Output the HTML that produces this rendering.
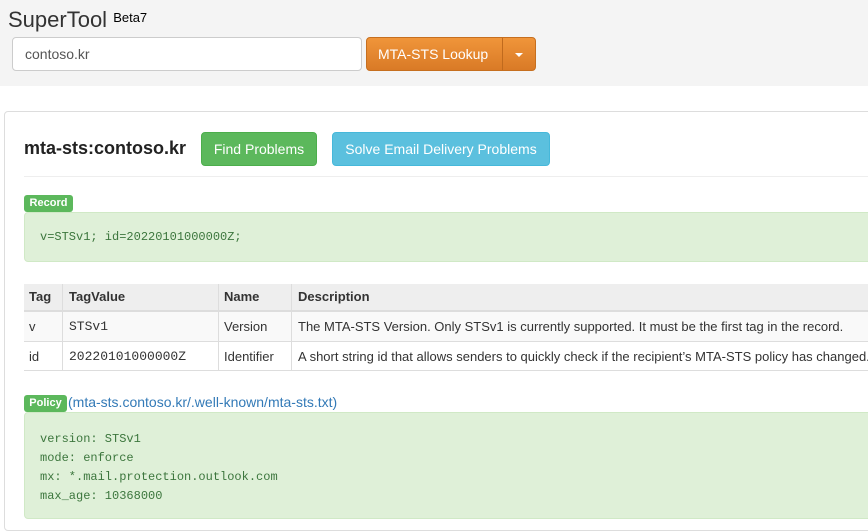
<!DOCTYPE html>
<html><head><meta charset="utf-8"><style>
*{box-sizing:border-box;margin:0;padding:0}
body{width:868px;height:522px;overflow:hidden;background:#fff;font-family:"Liberation Sans",Arial,sans-serif;color:#333;position:relative}
.a{position:absolute;white-space:nowrap}
.mono{font-family:"Liberation Mono",monospace}
</style></head><body>
<div class="a" style="left:0;top:0;width:868px;height:86px;background:#f4f4f4"></div>
<div class="a" style="left:8px;top:7px;font-size:22px;color:#333">SuperTool <span style="font-size:13px;color:#000;position:relative;top:-5px">Beta7</span></div>
<div class="a" style="left:12px;top:37px;width:350px;height:34px;background:#fff;border:1px solid #ccc;border-radius:4px;font-size:14px;color:#555;padding:8px 12px">contoso.kr</div>
<div class="a" style="left:366px;top:37px;width:170px;height:34px;border-radius:4px;background:linear-gradient(#f0953a,#d97a26);border:1px solid #c66f1f"></div>
<div class="a" style="left:378px;top:46px;font-size:14px;color:#fff">MTA-STS Lookup</div>
<div class="a" style="left:502px;top:38px;width:1px;height:32px;background:#c06a1d"></div>
<div class="a" style="left:515px;top:53px;width:0;height:0;border-left:4px solid transparent;border-right:4px solid transparent;border-top:4px solid #fff"></div>

<div class="a" style="left:4px;top:111px;width:880px;height:420px;border:1px solid #ddd;border-radius:4px"></div>
<div class="a" style="left:24px;top:138px;font-size:18px;font-weight:bold;color:#222">mta-sts:contoso.kr</div>
<div class="a" style="left:201px;top:132px;width:116px;height:34px;background:#5cb85c;border:1px solid #4cae4c;border-radius:4px;color:#fff;font-size:14px;text-align:center;line-height:32px">Find Problems</div>
<div class="a" style="left:332px;top:132px;width:218px;height:34px;background:#5bc0de;border:1px solid #46b8da;border-radius:4px;color:#fff;font-size:14px;text-align:center;line-height:32px">Solve Email Delivery Problems</div>
<div class="a" style="left:24px;top:176px;width:850px;height:1px;background:#eee"></div>

<div class="a" style="left:24px;top:195px;width:49px;height:17px;background:#5cb85c;border-radius:3px;color:#fff;font-size:11px;font-weight:bold;text-align:center;line-height:17px">Record</div>
<div class="a" style="left:24px;top:212px;width:860px;height:50px;background:#dff0d8;border:1px solid #d0e9c6;border-radius:4px"></div>
<div class="a mono" style="left:40px;top:230px;font-size:12px;color:#3c763d">v=STSv1; id=20220101000000Z;</div>

<div class="a" style="left:24px;top:284px;width:860px;height:28px;background:#eee;border-bottom:2px solid #ddd"></div>
<div class="a" style="left:24px;top:312px;width:860px;height:30px;background:#f9f9f9;border-bottom:1px solid #ddd"></div>
<div class="a" style="left:24px;top:342px;width:860px;height:29px;border-bottom:1px solid #ddd"></div>
<div class="a" style="left:62px;top:284px;width:1px;height:87px;background:#ddd"></div>
<div class="a" style="left:218px;top:284px;width:1px;height:87px;background:#ddd"></div>
<div class="a" style="left:291px;top:284px;width:1px;height:87px;background:#ddd"></div>
<div class="a" style="left:29px;top:289px;font-size:13px;font-weight:bold">Tag</div>
<div class="a" style="left:69px;top:289px;font-size:13px;font-weight:bold">TagValue</div>
<div class="a" style="left:224px;top:289px;font-size:13px;font-weight:bold">Name</div>
<div class="a" style="left:298px;top:289px;font-size:13px;font-weight:bold">Description</div>
<div class="a" style="left:29px;top:319px;font-size:13px">v</div>
<div class="a mono" style="left:69px;top:319px;font-size:13px">STSv1</div>
<div class="a" style="left:224px;top:319px;font-size:13px">Version</div>
<div class="a" style="left:298px;top:319px;font-size:13px">The MTA-STS Version. Only STSv1 is currently supported. It must be the first tag in the record.</div>
<div class="a" style="left:29px;top:349px;font-size:13px">id</div>
<div class="a mono" style="left:69px;top:349px;font-size:13px">20220101000000Z</div>
<div class="a" style="left:224px;top:349px;font-size:13px">Identifier</div>
<div class="a" style="left:298px;top:349px;font-size:13px">A short string id that allows senders to quickly check if the recipient’s MTA-STS policy has changed.</div>

<div class="a" style="left:24px;top:395px;width:43px;height:17px;background:#5cb85c;border-radius:3px;color:#fff;font-size:11px;font-weight:bold;text-align:center;line-height:17px">Policy</div>
<div class="a" style="left:68px;top:394px;font-size:14px;color:#337ab7">(mta-sts.contoso.kr/.well-known/mta-sts.txt)</div>
<div class="a" style="left:24px;top:412px;width:860px;height:107px;background:#dff0d8;border:1px solid #d0e9c6;border-radius:4px"></div>
<div class="a mono" style="left:40px;top:430px;font-size:12px;line-height:19px;color:#3c763d;white-space:pre">version: STSv1
mode: enforce
mx: *.mail.protection.outlook.com
max_age: 10368000</div>
</body></html>
